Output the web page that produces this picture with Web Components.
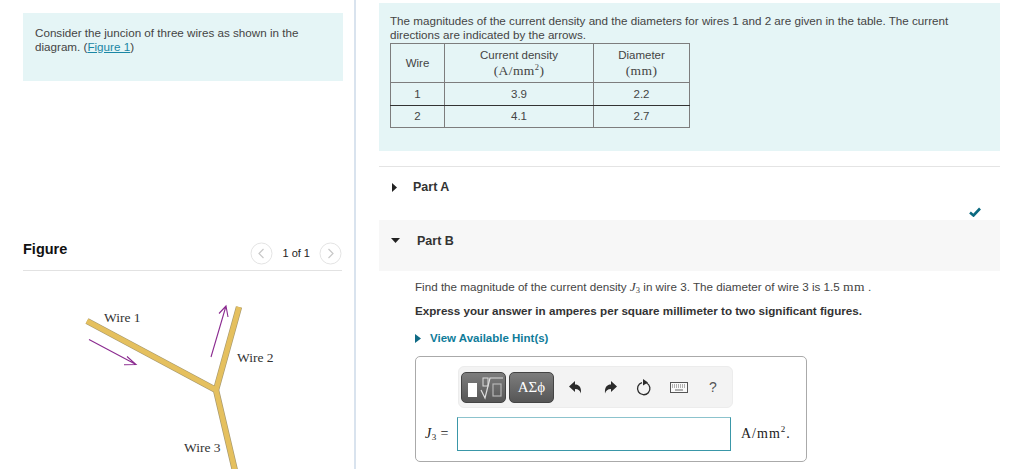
<!DOCTYPE html>
<html>
<head>
<meta charset="utf-8">
<title>Part B</title>
<style>
html,body{margin:0;height:469px;overflow:hidden;background:#fff}
body{font-family:"Liberation Sans",Arial,sans-serif;color:#333}
</style>
</head>
<body>
<quiz-page>
    <figure-panel slot="left">
        <note-box>Consider the juncion of three wires as shown in the diagram. (<a href="#" style="color:#1a87a5">Figure 1</a>)</note-box>
    </figure-panel>
    <question-panel slot="right"></question-panel>
</quiz-page>
<script>
class QuizPage extends HTMLElement {
    constructor() {
        super();
        this.attachShadow({ mode: 'open' });
        this.shadowRoot.innerHTML = `
        <style>
        :host{display:grid;grid-template-columns:356px 1fr;height:469px;overflow:hidden}
        #left{border-right:2px solid #d9e3ee;box-sizing:border-box;height:469px;overflow:hidden}
        #right{padding:3px 24px 0 23px;min-width:0}
        </style>
        <div id="left"><slot name="left"></slot></div>
        <div id="right"><slot name="right"></slot></div>
        `;
    }
}

class NoteBox extends HTMLElement {
    constructor() {
        super();
        this.attachShadow({ mode: 'open' });
        this.shadowRoot.innerHTML = `
        <style>
        :host{display:block;background:#e5f5f6;box-sizing:border-box;font-size:11.65px;line-height:14px;color:#444}
        </style>
        <slot></slot>
        `;
    }
}

class FigurePanel extends HTMLElement {
    constructor() {
        super();
        this.attachShadow({ mode: 'open' });
        this.shadowRoot.innerHTML = `
        <style>
        :host{display:block;padding:13px 11px 0 23px}
        ::slotted(note-box){height:68px;padding:13px 12px}
        header{display:flex;align-items:center;margin:157px 1px 0 0;height:32px;border-bottom:1px solid #e2e2e2;color:#222}
        h2{margin:0 auto 10px 0;font-size:14.5px;line-height:18px;font-weight:bold;color:#111}
        .nav{display:flex;align-items:center;gap:9px;font-size:11px;margin:0 0 2px -1px}
        .nav svg{display:block}
        #diagram{display:block;margin:0 0 0 -23px}
        text{font-family:"Liberation Serif",serif;font-size:13.5px;fill:#333}
        </style>
        <slot></slot>
        <header>
            <h2>Figure</h2>
            <div class="nav">
                <svg width="23" height="23" viewBox="0 0 23 23"><circle cx="11.5" cy="11.5" r="10.5" fill="#fff" stroke="#e4e4e4"/><path d="M13.5 7l-4.5 4.5 4.5 4.5" fill="none" stroke="#c8c8c8" stroke-width="1.2"/></svg>
                <span>1 of 1</span>
                <svg width="23" height="23" viewBox="0 0 23 23"><circle cx="11.5" cy="11.5" r="10.5" fill="#fff" stroke="#e4e4e4"/><path d="M9.5 7l4.500 4.500-4.500 4.500" fill="none" stroke="#c8c8c8" stroke-width="1.2"/></svg>
            </div>
        </header>
        <svg id="diagram" width="354" height="198" viewBox="0 271 354 198">
            <g fill="none" stroke-linejoin="miter">
                <path d="M87 321L216 390L239 307M216 390L236 475" stroke="#a89a70" stroke-width="6.4"/>
                <path d="M87 321L216 390L239 307M216 390L236 475" stroke="#e5c05e" stroke-width="5"/>
            </g>
            <g fill="none" stroke="#8b2b90" stroke-width="1.1">
                <path d="M89 339.500L136 364.500M127 356.500L136 364.500L124 364.800"/>
                <path d="M211 357L226 306M219 313.500L226 306L228 317"/>
            </g>
            <text x="104" y="322">Wire 1</text>
            <text x="237" y="362">Wire 2</text>
            <text x="184" y="452">Wire 3</text>
        </svg>
        `;
    }
}

class DataTable extends HTMLElement {
    constructor() {
        super();
        this.attachShadow({ mode: 'open' });
        this.shadowRoot.innerHTML = `
        <style>
        :host{display:block;font-size:11.5px;color:#444}
        table{border-collapse:collapse;width:300px;table-layout:fixed;text-align:center}
        td{border:1px solid #7d7d7d;padding:0;line-height:15px}
        .head td{height:38px}
        .one td{height:22px}
        .two td{height:21px}
        .one td{border-bottom-color:#333}
        .m{font-family:"Liberation Serif",serif;font-size:13.5px;letter-spacing:.4px}
        sup{font-size:8.5px;line-height:0}
        </style>
        <table>
            <colgroup><col style="width:54px"><col style="width:149px"><col style="width:96px"></colgroup>
            <tr class="head"><td>Wire</td><td>Current density<br><span class="m">(A/mm<sup>2</sup>)</span></td><td>Diameter<br><span class="m">(mm)</span></td></tr>
            <tr class="one"><td>1</td><td>3.9</td><td>2.2</td></tr>
            <tr class="two"><td>2</td><td>4.1</td><td>2.7</td></tr>
        </table>
        `;
    }
}

class PartRow extends HTMLElement {
    constructor() {
        super();
        this.attachShadow({ mode: 'open' });
        const open = this.hasAttribute('open');
        const tri = open
            ? '<path d="M0 1h9L4.500 6z"/>'
            : '<path d="M1 0l5 4.500L1 9z"/>';
        this.shadowRoot.innerHTML = `
        <style>
        :host{display:block;position:relative;font-size:12.5px;font-weight:bold;color:#333}
        :host([open]){background:#f7f7f7;height:51px}
        :host(:not([open])){height:53px;border-top:1px solid #e4e4e4}
        .row{display:flex;align-items:center;padding:13px 0 0 12px;line-height:14px}
        :host([open]) .row{padding-top:14px}
        svg.tri{display:block;width:9px;height:9px;fill:#222}
        span{margin-left:13px}
        :host([open]) span{margin-left:17px}
        ::slotted([slot=mark]){position:absolute;right:19px;bottom:3px}
        </style>
        <div class="row"><svg class="tri" viewBox="0 0 9 9">${tri}</svg><span>${this.getAttribute('label')}</span></div>
        <slot name="mark"></slot>
        `;
    }
}

class ToolBar extends HTMLElement {
    constructor() {
        super();
        this.attachShadow({ mode: 'open' });
        this.shadowRoot.innerHTML = `
        <style>
        :host{display:flex;align-items:center;width:275px;height:42px;box-sizing:border-box;padding-left:2px;background:#f3f3f3;border-radius:6px;border:1px solid #ececec}
        .btn{width:45px;height:31px;box-sizing:border-box;border:1px solid #444;border-radius:5px;background:linear-gradient(#7d7d7d,#565656);display:flex;align-items:center;justify-content:center;color:#fff;margin-right:3px}
        .sym{font-family:"Liberation Serif",serif;font-size:15px}
        .icons{display:flex;align-items:center;margin-left:12px}
        .icons svg{display:block}
        .q{font-size:14px;color:#555;margin-left:21px}
        </style>
        <div class="btn">
            <svg width="43" height="29" viewBox="1 1 43 29"><rect x="7" y="11" width="9" height="14" fill="#fff"/><rect x="22" y="6" width="5" height="8" fill="none" stroke="#ddd"/><path d="M20 18l4 8 5-20h13" fill="none" stroke="#ddd" stroke-width="1.2"/><rect x="32" y="12" width="8" height="12" fill="none" stroke="#b5b5b5" stroke-width="1.2"/></svg>
        </div>
        <div class="btn sym">ΑΣϕ</div>
        <div class="icons">
            <svg width="13" height="13" viewBox="0 0 13 13"><path d="M0 5.500L6 0v3.500C10 3.500 12.500 6 12 12.500 11 9.500 9.500 8 6 8v3z" fill="#2b2b2b"/></svg>
            <svg style="margin-left:22px" width="13" height="13" viewBox="0 0 13 13"><path d="M13 5.500L7 0v3.500C3 3.500 .5 6 1 12.500 2 9.500 3.500 8 7 8v3z" fill="#2b2b2b"/></svg>
            <svg style="margin-left:19px" width="16" height="17" viewBox="0 0 16 17"><path d="M6 3.600A6.200 6.200 0 1 0 10.500 4" fill="none" stroke="#2b2b2b" stroke-width="1.300"/><path d="M7 0l5 3.500L7 6.500z" fill="#2b2b2b"/></svg>
            <svg style="margin-left:18px" width="18" height="11" viewBox="0 0 18 11"><rect x=".5" y=".5" width="17" height="10" fill="#fafafa" stroke="#555"/><path d="M2 3h14M2 5h14" stroke="#666" stroke-dasharray="1 1"/><path d="M5 8h8" stroke="#666"/></svg>
            <span class="q">?</span>
        </div>
        `;
    }
}

class AnswerBox extends HTMLElement {
    constructor() {
        super();
        this.attachShadow({ mode: 'open' });
        this.shadowRoot.innerHTML = `
        <style>
        :host{display:block;width:392px;height:106px;box-sizing:border-box;border:1px solid #aaa;border-radius:5px;padding:9px 14px 0 9px}
        .tools{margin-left:33px}
        .line{display:flex;align-items:center;margin-top:9px;font-family:"Liberation Serif",serif;font-size:14px;color:#222}
        .lab{width:32px;white-space:nowrap;font-size:14px;letter-spacing:.4px}
        sub{font-size:9px;font-style:normal;line-height:0;vertical-align:-2px}
        .field{width:274px;height:34px;box-sizing:border-box;border:1px solid #3a97a8;border-top-color:#8cc3cd;background:#fff}
        .unit{margin-left:10px;white-space:nowrap;letter-spacing:1px}
        sup{font-size:9px;line-height:0}
        </style>
        <tool-bar class="tools"></tool-bar>
        <div class="line">
            <span class="lab"><i>J</i><sub>3</sub> = </span>
            <div class="field"></div>
            <span class="unit">A/mm<sup>2</sup>.</span>
        </div>
        `;
    }
}

class QuestionPanel extends HTMLElement {
    constructor() {
        super();
        this.attachShadow({ mode: 'open' });
        this.shadowRoot.innerHTML = `
        <style>
        :host{display:block;font-size:11.65px;color:#444}
        note-box{height:148px;padding:11px 11px 0}
        data-table{margin-top:1px}
        part-row{margin-top:15px}
        part-row[open]{margin-top:0}
        .check{display:block}
        .body{padding:9px 0 0 36px;line-height:14px}
        p{margin:0 0 10px}
        p.ask{margin-bottom:13px}
        .m{font-family:"Liberation Serif",serif;font-size:13.5px;line-height:0}
        sub{font-size:8.5px;line-height:0;vertical-align:-2px}
        b{color:#333}
        .hint{display:flex;align-items:center;font-weight:bold;font-size:11.5px;color:#0f7c9a;gap:9px;margin-bottom:11px}
        .hint svg{display:block;width:6px;height:9px;fill:#0f6a85}
        </style>
        <note-box>
            The magnitudes of the current density and the diameters for wires 1 and 2 are given in the table. The current directions are indicated by the arrows.
            <data-table></data-table>
        </note-box>
        <part-row label="Part A">
            <svg slot="mark" class="check" width="12" height="10" viewBox="0 0 12 10"><path d="M1 5.500L4.500 8.500L11 1.500" fill="none" stroke="#0b6a80" stroke-width="2.600"/></svg>
        </part-row>
        <part-row open label="Part B"></part-row>
        <div class="body">
            <p>Find the magnitude of the current density <span class="m"><i>J</i><sub>3</sub></span> in wire 3. The diameter of wire 3 is 1.5 <span class="m" style="letter-spacing:.4px">mm</span> .</p>
            <p class="ask"><b>Express your answer in amperes per square millimeter to two significant figures.</b></p>
            <div class="hint"><svg viewBox="0 0 6 9"><path d="M0 0l6 4.500L0 9z"/></svg>View Available Hint(s)</div>
            <answer-box></answer-box>
        </div>
        `;
    }
}

customElements.define('quiz-page', QuizPage);
customElements.define('note-box', NoteBox);
customElements.define('figure-panel', FigurePanel);
customElements.define('data-table', DataTable);
customElements.define('part-row', PartRow);
customElements.define('tool-bar', ToolBar);
customElements.define('answer-box', AnswerBox);
customElements.define('question-panel', QuestionPanel);
</script>
</body>
</html>
